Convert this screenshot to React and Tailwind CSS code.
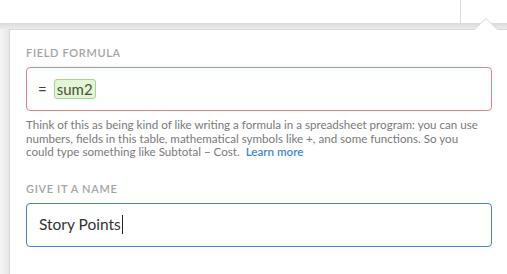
export default function App() {
  return (
    <div className="relative w-[507px] h-[274px] overflow-hidden bg-white" style={{ fontFamily: "Lato, 'Open Sans', sans-serif" }}>
      {/* top strip */}
      <div className="h-[23px] w-[461px] border-r border-[#dcdcdc]" />
      <div className="h-[6px] bg-gradient-to-b from-[#dadada] to-[#ececec]" />
      <div className="flex h-[245px]">
        <div className="w-[9px] bg-gradient-to-r from-[#f6f6f6] to-[#e6e6e6]" />
        <div className="flex-1 border-l border-t border-[#d8d8d8] bg-white pl-[16px] pt-[16px]">
          <div className="text-[11px] leading-[14px] tracking-[0.06em] font-semibold text-[#a5a5a5]">FIELD FORMULA</div>
          <div className="mt-[7px] h-[44px] w-[466px] rounded-[4px] border border-[#e98282] flex items-center pl-[11px]">
            <span className="text-[15px] text-[#444] mr-[7px]">=</span>
            <span className="rounded-[3px] border border-[#a7d48e] bg-[#e3f5d6] px-[2px] h-[20px] flex items-center text-[15px] text-[#46523f]">sum2</span>
          </div>
          <p className="mt-[7px] w-[458px] text-[11.6px] leading-[13.6px] text-[#7a7a7a]">
            Think of this as being kind of like writing a formula in a spreadsheet program: you can use numbers, fields in this table, mathematical symbols like +, and some functions. So you could type something like Subtotal − Cost.&nbsp; <span className="text-[#3d8ad8] font-semibold">Learn more</span>
          </p>
          <div className="mt-[23px] text-[11px] leading-[14px] tracking-[0.06em] font-semibold text-[#a5a5a5]">GIVE IT A NAME</div>
          <div className="mt-[7px] h-[44px] w-[466px] rounded-[4px] border border-[#4a82c8] flex items-center pl-[12px]">
            <span className="text-[15.5px] text-[#333]">Story Points</span>
            <span className="ml-[1px] w-px h-[19px] bg-[#222]" />
          </div>
        </div>
      </div>
      {/* arrow */}
      <svg className="absolute left-[474px] top-[18px]" width="26" height="13" viewBox="0 0 26 13">
        <path d="M0 12 L12 0.5 L24 12" fill="#ffffff" stroke="#d8d8d8" strokeWidth="1" />
        <rect x="1" y="11.5" width="22" height="2" fill="#ffffff" />
      </svg>
    </div>
  );
}
